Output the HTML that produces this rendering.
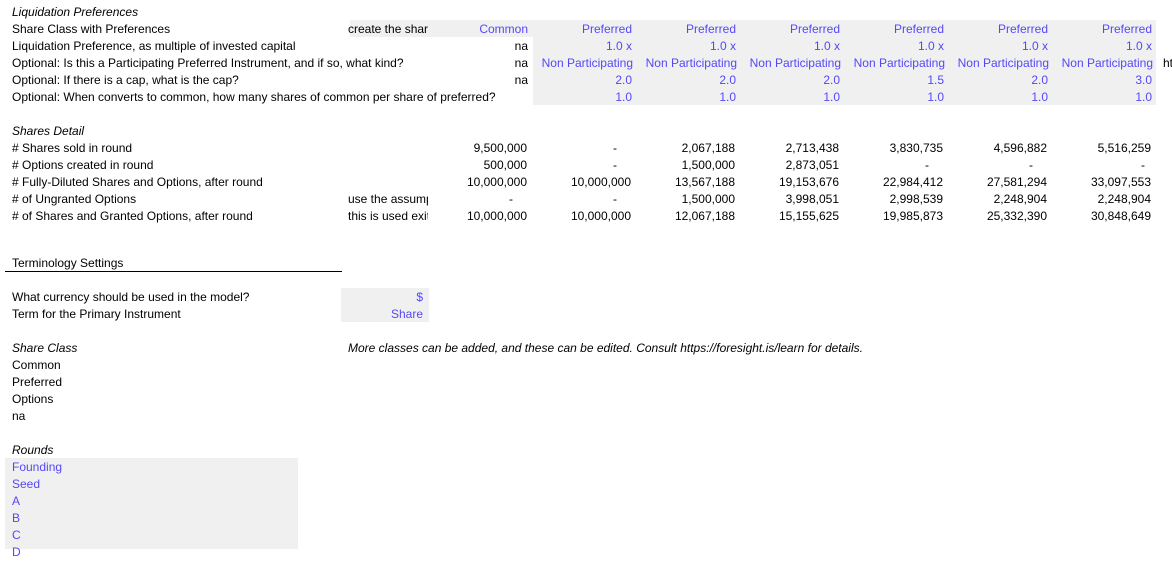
<!DOCTYPE html>
<html><head><meta charset="utf-8"><style>
body{margin:0;width:1172px;height:548px;overflow:hidden;background:#fff;font-family:"Liberation Sans",sans-serif;font-size:12px;color:#000;position:relative}
div{position:absolute;white-space:nowrap;line-height:17px;height:17px;margin-top:1px}
.g{background:#f0f0f0;height:auto}
.b{color:#5548f5}
.i{font-style:italic}
.r{text-align:right;width:100px}
.cB{left:348px;width:80px;overflow:hidden}
</style></head><body>
<div class="g" style="left:350px;top:19px;width:806px;height:17px"></div>
<div class="g" style="left:533px;top:36px;width:623px;height:68px"></div>
<div class="g" style="left:341px;top:287px;width:88px;height:34px"></div>
<div class="g" style="left:5px;top:457px;width:293px;height:91px"></div>

<div class="i" style="left:12px;top:3px">Liquidation Preferences</div>
<div style="left:12px;top:20px">Share Class with Preferences</div>
<div class="cB" style="top:20px">create the share</div>
<div style="left:12px;top:37px">Liquidation Preference, as multiple of invested capital</div>
<div style="left:12px;top:54px">Optional: Is this a Participating Preferred Instrument, and if so, what kind?</div>
<div style="left:12px;top:71px">Optional: If there is a cap, what is the cap?</div>
<div style="left:12px;top:88px">Optional: When converts to common, how many shares of common per share of preferred?</div>

<div class="r b" style="left:428px;top:20px">Common</div>
<div class="r" style="left:428px;top:37px">na</div>
<div class="r" style="left:428px;top:54px">na</div>
<div class="r" style="left:428px;top:71px">na</div>

<div class="r b" style="left:532px;top:20px">Preferred</div><div class="r b" style="left:532px;top:37px">1.0 x</div><div class="r b" style="left:532px;top:54px;width:101px">Non Participating</div><div class="r b" style="left:532px;top:71px">2.0</div><div class="r b" style="left:532px;top:88px">1.0</div>
<div class="r b" style="left:636px;top:20px">Preferred</div><div class="r b" style="left:636px;top:37px">1.0 x</div><div class="r b" style="left:636px;top:54px;width:101px">Non Participating</div><div class="r b" style="left:636px;top:71px">2.0</div><div class="r b" style="left:636px;top:88px">1.0</div>
<div class="r b" style="left:740px;top:20px">Preferred</div><div class="r b" style="left:740px;top:37px">1.0 x</div><div class="r b" style="left:740px;top:54px;width:101px">Non Participating</div><div class="r b" style="left:740px;top:71px">2.0</div><div class="r b" style="left:740px;top:88px">1.0</div>
<div class="r b" style="left:844px;top:20px">Preferred</div><div class="r b" style="left:844px;top:37px">1.0 x</div><div class="r b" style="left:844px;top:54px;width:101px">Non Participating</div><div class="r b" style="left:844px;top:71px">1.5</div><div class="r b" style="left:844px;top:88px">1.0</div>
<div class="r b" style="left:948px;top:20px">Preferred</div><div class="r b" style="left:948px;top:37px">1.0 x</div><div class="r b" style="left:948px;top:54px;width:101px">Non Participating</div><div class="r b" style="left:948px;top:71px">2.0</div><div class="r b" style="left:948px;top:88px">1.0</div>
<div class="r b" style="left:1052px;top:20px">Preferred</div><div class="r b" style="left:1052px;top:37px">1.0 x</div><div class="r b" style="left:1052px;top:54px;width:101px">Non Participating</div><div class="r b" style="left:1052px;top:71px">3.0</div><div class="r b" style="left:1052px;top:88px">1.0</div>
<div style="left:1163px;top:54px">ht</div>

<div class="i" style="left:12px;top:122px">Shares Detail</div>
<div style="left:12px;top:139px"># Shares sold in round</div>
<div style="left:12px;top:156px"># Options created in round</div>
<div style="left:12px;top:173px"># Fully-Diluted Shares and Options, after round</div>
<div style="left:12px;top:190px"># of Ungranted Options</div>
<div style="left:12px;top:207px"># of Shares and Granted Options, after round</div>
<div class="cB" style="top:190px">use the assump</div>
<div class="cB" style="top:207px">this is used exit</div>

<div class="r" style="left:427px;top:139px">9,500,000</div><div class="r" style="left:427px;top:156px">500,000</div><div class="r" style="left:427px;top:173px">10,000,000</div><div class="r" style="left:427px;top:190px;padding-right:14px;width:86px">-</div><div class="r" style="left:427px;top:207px">10,000,000</div>
<div class="r" style="left:531px;top:139px;padding-right:14px;width:86px">-</div><div class="r" style="left:531px;top:156px;padding-right:14px;width:86px">-</div><div class="r" style="left:531px;top:173px">10,000,000</div><div class="r" style="left:531px;top:190px;padding-right:14px;width:86px">-</div><div class="r" style="left:531px;top:207px">10,000,000</div>
<div class="r" style="left:635px;top:139px">2,067,188</div><div class="r" style="left:635px;top:156px">1,500,000</div><div class="r" style="left:635px;top:173px">13,567,188</div><div class="r" style="left:635px;top:190px">1,500,000</div><div class="r" style="left:635px;top:207px">12,067,188</div>
<div class="r" style="left:739px;top:139px">2,713,438</div><div class="r" style="left:739px;top:156px">2,873,051</div><div class="r" style="left:739px;top:173px">19,153,676</div><div class="r" style="left:739px;top:190px">3,998,051</div><div class="r" style="left:739px;top:207px">15,155,625</div>
<div class="r" style="left:843px;top:139px">3,830,735</div><div class="r" style="left:843px;top:156px;padding-right:14px;width:86px">-</div><div class="r" style="left:843px;top:173px">22,984,412</div><div class="r" style="left:843px;top:190px">2,998,539</div><div class="r" style="left:843px;top:207px">19,985,873</div>
<div class="r" style="left:947px;top:139px">4,596,882</div><div class="r" style="left:947px;top:156px;padding-right:14px;width:86px">-</div><div class="r" style="left:947px;top:173px">27,581,294</div><div class="r" style="left:947px;top:190px">2,248,904</div><div class="r" style="left:947px;top:207px">25,332,390</div>
<div class="r" style="left:1051px;top:139px">5,516,259</div><div class="r" style="left:1051px;top:156px;padding-right:6px;width:94px">-</div><div class="r" style="left:1051px;top:173px">33,097,553</div><div class="r" style="left:1051px;top:190px">2,248,904</div><div class="r" style="left:1051px;top:207px">30,848,649</div>

<div style="left:12px;top:254px">Terminology Settings</div>
<div style="left:5px;top:270px;width:337px;height:1px;background:#000"></div>
<div style="left:12px;top:288px">What currency should be used in the model?</div>
<div style="left:12px;top:305px">Term for the Primary Instrument</div>
<div class="r b" style="left:323px;top:288px">$</div>
<div class="r b" style="left:323px;top:305px">Share</div>

<div class="i" style="left:12px;top:339px">Share Class</div>
<div class="i" style="left:348px;top:339px">More classes can be added, and these can be edited. Consult https://foresight.is/learn for details.</div>
<div style="left:12px;top:356px">Common</div>
<div style="left:12px;top:373px">Preferred</div>
<div style="left:12px;top:390px">Options</div>
<div style="left:12px;top:407px">na</div>

<div class="i" style="left:12px;top:441px">Rounds</div>
<div class="b" style="left:12px;top:458px">Founding</div>
<div class="b" style="left:12px;top:475px">Seed</div>
<div class="b" style="left:12px;top:492px">A</div>
<div class="b" style="left:12px;top:509px">B</div>
<div class="b" style="left:12px;top:526px">C</div>
<div class="b" style="left:12px;top:543px">D</div>
</body></html>
